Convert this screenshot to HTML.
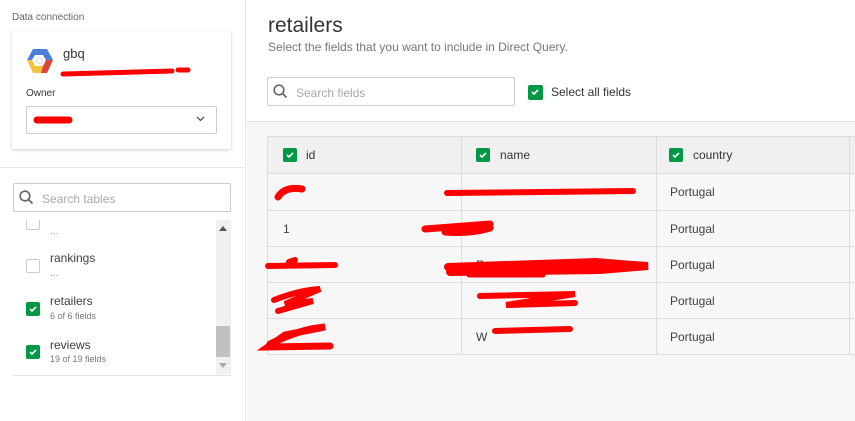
<!DOCTYPE html>
<html><head><meta charset="utf-8"><style>
*{margin:0;padding:0;box-sizing:border-box}
body{width:855px;height:421px;overflow:hidden;background:#fff;font-family:"Liberation Sans",sans-serif;color:#404040;position:relative}
.a{position:absolute}
.cb{position:absolute;width:14px;height:14px;background:#009845;border-radius:2px}
.cb svg{position:absolute;left:2px;top:2px}
.ecb{position:absolute;width:14px;height:14px;border:1px solid #ccc;background:#fff;border-radius:2px}
.t{font-size:12px}
</style></head><body>
<div class="a" style="left:0;top:0;width:246px;height:421px;background:#fff;border-right:1px solid #e6e6e6"></div>
<div class="a" style="left:12px;top:12px;font-size:10px;color:#666">Data connection</div>
<div class="a" style="left:12px;top:31px;width:219px;height:118px;background:#fff;box-shadow:0 1px 3px rgba(0,0,0,.2);border-radius:2px"></div>
<svg class="a" style="left:26px;top:48px" width="28" height="26" viewBox="0 0 28 26">
<polygon points="7,1 21,1 27,12 20,12 17,7 9,7 6,12 1,12" fill="#4a7fd8"/>
<polygon points="1,12 6,12 9,18 17,18 15,25 7,25" fill="#f6c33a"/>
<polygon points="20,12 27,12 21,25 15,25 17,18" fill="#dc4437"/>
<circle cx="13.5" cy="12.5" r="5.5" fill="#fff"/><circle cx="13.5" cy="12.5" r="3.5" fill="#ddd"/><circle cx="13.5" cy="12.5" r="2.4" fill="#fff"/>
</svg>
<div class="a" style="left:63px;top:46px;font-size:13px;color:#333">gbq</div>
<div class="a" style="left:26px;top:88px;font-size:10px;color:#333">Owner</div>
<div class="a" style="left:26px;top:106px;width:191px;height:28px;border:1px solid #ccc;border-radius:2px"></div>
<svg class="a" style="left:196px;top:116px" width="9" height="6"><path d="M1 1l3.5 3.5L8 1" stroke="#555" stroke-width="1.3" fill="none"/></svg>
<div class="a" style="left:0;top:167px;width:246px;height:1px;background:#e6e6e6"></div>
<div class="a" style="left:13px;top:183px;width:218px;height:29px;border:1px solid #ccc;border-radius:2px"></div>
<svg class="a" style="left:19px;top:190px" width="15" height="15"><circle cx="6" cy="6" r="4.8" stroke="#666" stroke-width="1.6" fill="none"/><path d="M9.5 9.5l4 4" stroke="#666" stroke-width="1.8"/></svg>
<div class="a t" style="left:42px;top:192px;color:#aaa">Search tables</div>
<div class="a" style="left:13px;top:220px;width:218px;height:156px;border-bottom:1px solid #e0e0e0;overflow:hidden">
 <div class="ecb" style="left:13px;top:-4px"></div>
 <div class="a" style="left:37px;top:6px;font-size:10px;color:#999">...</div>
 <div class="ecb" style="left:13px;top:39px"></div>
 <div class="a t" style="left:37px;top:31px">rankings</div>
 <div class="a" style="left:37px;top:48px;font-size:10px;color:#999">...</div>
 <div class="cb" style="left:13px;top:82px"><svg width="10" height="10"><path d="M2 5l2 2 4-4" stroke="#fff" stroke-width="1.6" fill="none"/></svg></div>
 <div class="a t" style="left:37px;top:74px">retailers</div>
 <div class="a" style="left:37px;top:91px;font-size:9px;color:#777">6 of 6 fields</div>
 <div class="cb" style="left:13px;top:125px"><svg width="10" height="10"><path d="M2 5l2 2 4-4" stroke="#fff" stroke-width="1.6" fill="none"/></svg></div>
 <div class="a t" style="left:37px;top:118px">reviews</div>
 <div class="a" style="left:37px;top:134px;font-size:9px;color:#777">19 of 19 fields</div>
 <div class="a" style="left:203px;top:0;width:15px;height:154px;background:#f0f0f0"></div>
 <div class="a" style="left:203px;top:106px;width:14px;height:31px;background:#c1c1c1"></div>
 <svg class="a" style="left:206px;top:6px" width="8" height="5"><path d="M0 5L4 0 8 5z" fill="#555"/></svg>
 <svg class="a" style="left:206px;top:143px" width="8" height="5"><path d="M0 0L4 5 8 0z" fill="#aaa"/></svg>
</div>
<div class="a" style="left:247px;top:121px;width:608px;height:300px;background:#f7f7f7;border-top:1px solid #e0e0e0"></div>
<div class="a" style="left:268px;top:14px;font-size:21px;color:#333">retailers</div>
<div class="a" style="left:268px;top:40px;font-size:12px;color:#777">Select the fields that you want to include in Direct Query.</div>
<div class="a" style="left:267px;top:77px;width:248px;height:29px;border:1px solid #ccc;border-radius:2px;background:#fff"></div>
<svg class="a" style="left:273px;top:84px" width="15" height="15"><circle cx="6" cy="6" r="4.8" stroke="#666" stroke-width="1.6" fill="none"/><path d="M9.5 9.5l4 4" stroke="#666" stroke-width="1.8"/></svg>
<div class="a t" style="left:296px;top:86px;color:#aaa">Search fields</div>
<div class="cb" style="left:528px;top:85px;width:15px;height:15px"><svg width="10" height="10"><path d="M2 5l2 2 4-4" stroke="#fff" stroke-width="1.6" fill="none"/></svg></div>
<div class="a t" style="left:551px;top:85px;color:#333">Select all fields</div>
<div class="a" style="left:267px;top:136px;width:588px;height:219px;border:1px solid #ddd;border-right:none;background:#f7f7f7"></div>
<div class="a" style="left:268px;top:137px;width:587px;height:37px;background:#f0f0f0;border-bottom:1px solid #ddd"></div>
<div class="a" style="left:267px;top:210px;width:588px;height:1px;background:#ddd"></div>
<div class="a" style="left:267px;top:246px;width:588px;height:1px;background:#ddd"></div>
<div class="a" style="left:267px;top:282px;width:588px;height:1px;background:#ddd"></div>
<div class="a" style="left:267px;top:318px;width:588px;height:1px;background:#ddd"></div>
<div class="a" style="left:461px;top:137px;width:1px;height:217px;background:#ddd"></div>
<div class="a" style="left:656px;top:137px;width:1px;height:217px;background:#ddd"></div>
<div class="a" style="left:849px;top:137px;width:1px;height:217px;background:#ddd"></div>
<div class="cb" style="left:283px;top:148px"><svg width="10" height="10"><path d="M2 5l2 2 4-4" stroke="#fff" stroke-width="1.6" fill="none"/></svg></div>
<div class="a t" style="left:306px;top:148px;color:#333">id</div>
<div class="cb" style="left:476px;top:148px"><svg width="10" height="10"><path d="M2 5l2 2 4-4" stroke="#fff" stroke-width="1.6" fill="none"/></svg></div>
<div class="a t" style="left:500px;top:148px;color:#333">name</div>
<div class="cb" style="left:669px;top:148px"><svg width="10" height="10"><path d="M2 5l2 2 4-4" stroke="#fff" stroke-width="1.6" fill="none"/></svg></div>
<div class="a t" style="left:693px;top:148px;color:#333">country</div>
<div class="a t" style="left:670px;top:185px">Portugal</div>
<div class="a t" style="left:283px;top:222px">1</div>
<div class="a t" style="left:670px;top:222px">Portugal</div>
<div class="a t" style="left:476px;top:258px">Ra</div>
<div class="a t" style="left:670px;top:258px">Portugal</div>
<div class="a t" style="left:670px;top:294px">Portugal</div>
<div class="a t" style="left:476px;top:330px">W</div>
<div class="a t" style="left:670px;top:330px">Portugal</div>
<svg class="a" style="left:0;top:0" width="855" height="421">
<g stroke="#f00" stroke-linecap="round" fill="none">
<path d="M63 74L172 71M178 70l10 0" stroke-width="5"/>
<path d="M37 120L69 120" stroke-width="7"/>
<path d="M278 197Q285 186 302 189" stroke-width="7"/>
<path d="M447 193L633 191" stroke-width="6"/>
<path d="M425 229L490 224M445 232Q470 234 490 228" stroke-width="7"/>
<path d="M268 266L335 265M289 262l6 -2" stroke-width="6"/>
<path d="M448 267L596 262Q630 265 648 266L600 270L450 272" stroke-width="8"/>
<path d="M469 275L543 275" stroke-width="5"/>
<path d="M274 300Q300 290 320 289L285 304L313 301L278 311" stroke-width="6"/>
<path d="M480 296L575 294L506 305L575 303" stroke-width="6"/>
<path d="M270 344Q300 329 325 327L285 335L268 347L330 346" stroke-width="7"/>
<path d="M495 331L570 329" stroke-width="6"/>
</g></svg>
</body></html>
